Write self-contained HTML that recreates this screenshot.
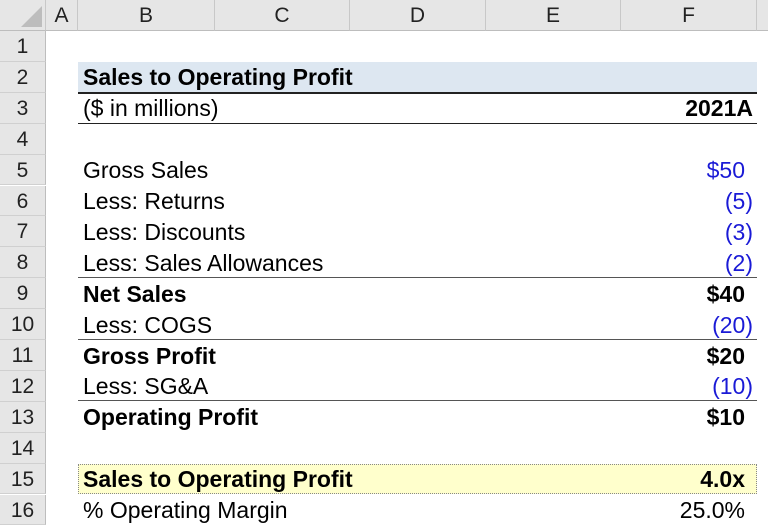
<!DOCTYPE html>
<html><head><style>
body{margin:0;width:768px;height:526px;overflow:hidden;background:#fff;font-family:"Liberation Sans",Arial,sans-serif;position:relative}
.h{position:absolute;top:0;height:31px;background:#e6e6e6;border-right:1px solid #c8c8c8;border-bottom:1px solid #bdbdbd;box-sizing:border-box;text-align:center;font-size:21px;line-height:31px;color:#222}
.rh{position:absolute;left:0;width:46px;background:#e6e6e6;border-right:1px solid #bdbdbd;border-bottom:1px solid #d0d0d0;box-sizing:border-box;text-align:center;font-size:21px;color:#222}
.c{position:absolute;font-size:23px;white-space:nowrap;color:#000}
.b{font-weight:bold}
.blue{color:#1a1ad6}
.ln{position:absolute;left:78px;width:679px;background:#222}
</style></head><body>
<div class="h" style="left:0;width:46px"><svg width="46" height="31" style="position:absolute;left:0;top:0"><polygon points="42,6 42,27 21,27" fill="#bdbdbd"/></svg></div>
<div class="h" style="left:46px;width:32px">A</div>
<div class="h" style="left:78px;width:137px">B</div>
<div class="h" style="left:215px;width:135px">C</div>
<div class="h" style="left:350px;width:136px">D</div>
<div class="h" style="left:486px;width:135px">E</div>
<div class="h" style="left:621px;width:136px">F</div>
<div class="h" style="left:757px;width:11px;border-right:none"></div>

<div style="position:absolute;left:78px;top:62px;width:679px;height:31px;background:#dde7f1"></div>
<div style="position:absolute;left:78px;top:464px;width:679px;height:30px;background:#ffffcc;border:1px dotted #888;box-sizing:border-box"></div>
<div class="ln" style="top:92px;height:2px"></div>
<div class="ln" style="top:123px;height:1px"></div>
<div class="ln" style="top:277px;height:1px;background:#555"></div>
<div class="ln" style="top:339px;height:1px;background:#555"></div>
<div class="ln" style="top:400px;height:1px;background:#555"></div>

<div id="rows"></div>
<script>
var data=[
[1],[2,"Sales to Operating Profit","",1],[3,"($ in millions)","2021A",0,1],[4],
[5,"Gross Sales","$50",0,0,1,1],[6,"Less: Returns","(5)",0,0,1],[7,"Less: Discounts","(3)",0,0,1],
[8,"Less: Sales Allowances","(2)",0,0,1],[9,"Net Sales","$40",1,1,0,1],[10,"Less: COGS","(20)",0,0,1],
[11,"Gross Profit","$20",1,1,0,1],[12,"Less: SG&A","(10)",0,0,1],[13,"Operating Profit","$10",1,1,0,1],[14],
[15,"Sales to Operating Profit","4.0x",1,1,0,1],[16,"% Operating Margin","25.0%",0,0,0,1]];
var h="";
for(var i=0;i<16;i++){var d=data[i];var t=31+i*30.9;
h+='<div class="rh" style="top:'+t+'px;height:30.9px;line-height:32px">'+d[0]+'</div>';
if(d[1]){h+='<div class="c'+(d[3]?' b':'')+'" style="left:83px;top:'+(t+0.5)+'px;line-height:31px">'+d[1].replace('&','&amp;')+'</div>';}
if(d[2]){var r=d[6]?23:15;h+='<div class="c'+(d[4]?' b':'')+(d[5]?' blue':'')+'" style="right:'+r+'px;top:'+(t+0.5)+'px;line-height:31px">'+d[2]+'</div>';}
}
document.getElementById('rows').innerHTML=h;
</script>
</body></html>
